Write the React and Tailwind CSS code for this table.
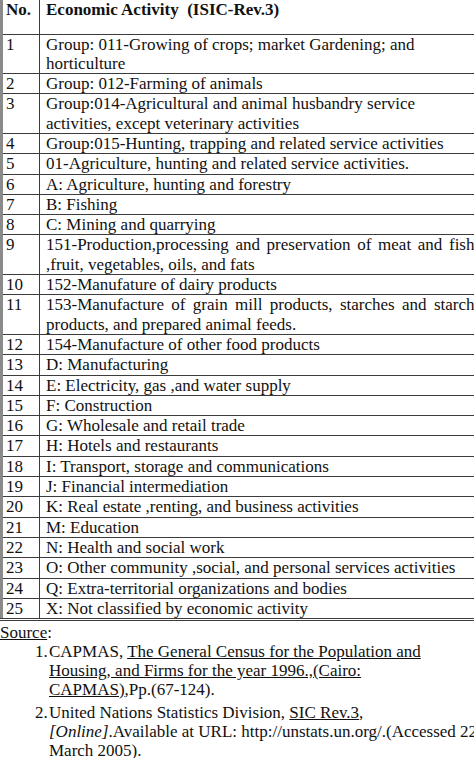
const rows = [
  ["1", "Group: 011-Growing of crops; market Gardening; and horticulture"],
  ["2", "Group: 012-Farming of animals"],
  ["3", "Group:014-Agricultural and animal husbandry service activities, except veterinary activities"],
  ["4", "Group:015-Hunting, trapping and related service activities"],
  ["5", "01-Agriculture, hunting and related service activities."],
  ["6", "A: Agriculture, hunting and forestry"],
  ["7", "B: Fishing"],
  ["8", "C: Mining and quarrying"],
  ["9", "151-Production,processing and preservation of meat and fish ,fruit, vegetables, oils, and fats", true],
  ["10", "152-Manufature of dairy products"],
  ["11", "153-Manufacture of grain mill products, starches and starch products, and prepared animal feeds.", true],
  ["12", "154-Manufacture of other food products"],
  ["13", "D: Manufacturing"],
  ["14", "E: Electricity, gas ,and water supply"],
  ["15", "F: Construction"],
  ["16", "G: Wholesale and retail trade"],
  ["17", "H: Hotels and restaurants"],
  ["18", "I: Transport, storage and communications"],
  ["19", "J: Financial intermediation"],
  ["20", "K: Real estate ,renting, and business activities"],
  ["21", "M: Education"],
  ["22", "N: Health and social work"],
  ["23", "O: Other community ,social, and personal services activities"],
  ["24", "Q: Extra-territorial organizations and bodies"],
  ["25", "X: Not classified by economic activity"],
]

const App = () => {
  return (
    <div className="w-[474px] h-[758px] overflow-hidden bg-white text-[#111] text-[17px] leading-[19.3px] font-['Liberation_Serif','Times_New_Roman',serif]">
      {/* Table */}
      <table className="w-[478px] table-fixed border-collapse border-l-[3px] border-l-[#8a8a8a]">
        <colgroup>
          <col className="w-[38px]" />
          <col className="w-[440px]" />
        </colgroup>
        <thead>
          <tr className="h-[34px] border-b border-[#3c3c3c]">
            <th className="align-top text-left font-bold pl-[3px] pt-0 border-r border-[#3c3c3c]">No.</th>
            <th className="align-top text-left font-bold pl-[6px] pt-0 whitespace-pre">Economic Activity  (ISIC-Rev.3)</th>
          </tr>
        </thead>
        <tbody>
          {rows.map(([no, text, justify], i) => (
            <tr
              key={no}
              className={i === rows.length - 1 ? "border-b-[3px] border-double border-[#3c3c3c]" : "border-b border-[#3c3c3c]"}
            >
              <td className="align-top pl-[3px] border-r border-[#3c3c3c]">{no}</td>
              <td className={"align-top pl-[6px] pr-[5px] " + (justify ? "text-justify" : "text-left")}>{text}</td>
            </tr>
          ))}
        </tbody>
      </table>

      {/* Source */}
      <div className="pt-[2px] leading-[19px] whitespace-nowrap">
        <div><span className="underline">Source</span>:</div>
        <div className="flex pl-[35px]">
          <span className="w-[14px] shrink-0">1.</span>
          <div>
            CAPMAS, <span className="underline">The General Census for the Population and</span>
            <br />
            <span className="underline">Housing, and Firms for the year 1996.,(Cairo:</span>
            <br />
            <span className="underline">CAPMAS)</span>,Pp.(67-124).
          </div>
        </div>
        <div className="flex pl-[35px] mt-[4px]">
          <span className="w-[14px] shrink-0">2.</span>
          <div>
            United Nations Statistics Division, <span className="underline">SIC Rev.3</span>,
            <br />
            <span className="italic">[Online]</span>.Available at URL: http://unstats.un.org/.(Accessed 22
            <br />
            March 2005).
          </div>
        </div>
      </div>
    </div>
  )
}

export default App
